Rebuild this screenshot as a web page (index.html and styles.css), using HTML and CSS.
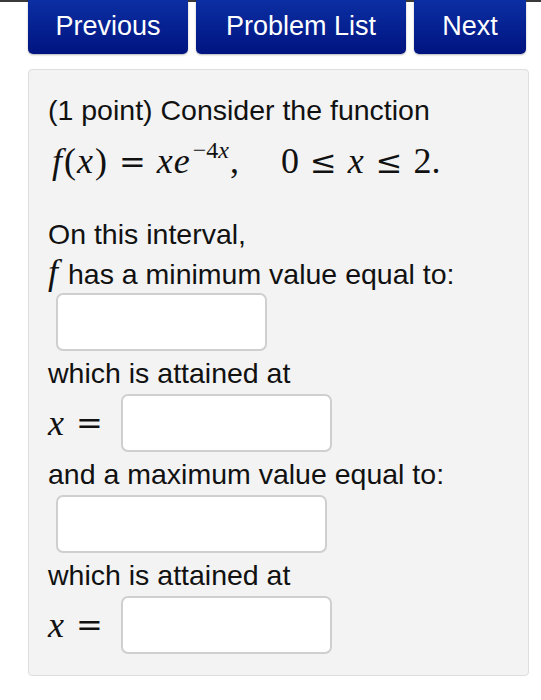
FILE: index.html
```html
<!DOCTYPE html>
<html lang="en">
<head>
    <meta charset="UTF-8">
    <meta name="viewport" content="width=device-width, initial-scale=1.0">
    <title>Problem</title>
    <link rel="stylesheet" href="styles.css">
</head>
<body>
    <div class="topline"></div>
    <div class="nav">
        <button class="nav-btn btn-prev">Previous</button>
        <button class="nav-btn btn-list">Problem List</button>
        <button class="nav-btn btn-next">Next</button>
    </div>

    <div class="problem">
        <div class="line">(1 point) Consider the function</div>
        <div class="line math-line">
            <span class="mi f-sym">f</span><span class="mo paren">(</span><span class="mi">x</span><span class="mo paren">)</span><span class="rel">=</span><span class="mi">x</span><span class="mi">e</span><sup class="sup"><span class="mo">&minus;4</span><span class="mi">x</span></sup><span class="mo comma">,</span><span class="mo num">0</span><span class="rel">&le;</span><span class="mi">x</span><span class="rel">&le;</span><span class="mo">2.</span>
        </div>

        <div class="line gap-top">On this interval,</div>
        <div class="line"><span class="mi fi">f</span> has a minimum value equal to:</div>
        <div class="answer-row"><input type="text" class="answer"></div>

        <div class="line">which is attained at</div>
        <div class="answer-row">
            <span class="lhs"><span class="mi">x</span><span class="rel">=</span></span>
            <input type="text" class="answer">
        </div>

        <div class="line">and a maximum value equal to:</div>
        <div class="answer-row"><input type="text" class="answer answer-long"></div>

        <div class="line">which is attained at</div>
        <div class="answer-row">
            <span class="lhs"><span class="mi">x</span><span class="rel">=</span></span>
            <input type="text" class="answer">
        </div>
    </div>
</body>
</html>
```
FILE: styles.css
```css
body {
    font-family: 'Liberation Sans', Arial, sans-serif;
    background-color: #fff;
    margin: 0;
    padding: 0;
    color: #111;
}
.topline {
    height: 2px;
    background-color: #3a3a3a;
}
.nav {
    display: flex;
    gap: 8px;
    padding-left: 28px;
    margin-top: -2px;
}
.nav-btn {
    height: 54px;
    padding: 0 0 2px;
    border: none;
    border-radius: 0 0 5px 5px;
    background: linear-gradient(#0b2fa3, #001480);
    color: #fff;
    font-family: 'Liberation Sans', Arial, sans-serif;
    font-size: 27px;
    box-shadow: 0 1px 2px rgba(0, 0, 0, 0.3);
}
.btn-prev { width: 160px; }
.btn-list { width: 210px; }
.btn-next { width: 112px; }
.problem {
    margin: 15px 12px 0 28px;
    background-color: #f3f3f3;
    border: 1px solid #dedede;
    border-radius: 4px;
    padding: 21px 19px 18px 19px;
}
.line {
    font-size: 28.5px;
    line-height: 38px;
    height: 38px;
    white-space: nowrap;
}
.math-line {
    height: 42px;
    line-height: 42px;
}
.gap-top {
    margin-top: 44px;
}
.mi {
    font-family: 'Liberation Serif', 'DejaVu Serif', serif;
    font-style: italic;
    font-size: 36px;
}
.mo {
    font-family: 'Liberation Serif', 'DejaVu Serif', serif;
    font-size: 36px;
}
.f-sym {
    margin-left: 4px;
    margin-right: 3px;
}
.paren {
    margin: 0 1px;
}
.math-line .mi {
    margin-right: 1px;
}
.rel {
    font-family: 'DejaVu Serif', serif;
    font-size: 32px;
    margin: 0 11px;
}
.sup {
    font-size: 0;
    vertical-align: 15px;
    margin-left: 2px;
}
.sup .mo,
.sup .mi {
    font-size: 24px;
}
.comma {
    margin-right: 42px;
}
.fi {
    margin-right: 2px;
}
.answer-row {
    display: flex;
    align-items: center;
    margin: 2px 0 3px 8px;
}
.lhs {
    display: flex;
    align-items: center;
    width: 73px;
    margin-left: -8px;
}
.lhs .rel {
    margin: 0 0 0 12px;
}
.answer {
    box-sizing: border-box;
    width: 211px;
    height: 58px;
    border: 2px solid #cfcfcf;
    border-radius: 7px;
    background-color: #fff;
    margin: 0;
}
.answer-long {
    width: 271px;
}
```
